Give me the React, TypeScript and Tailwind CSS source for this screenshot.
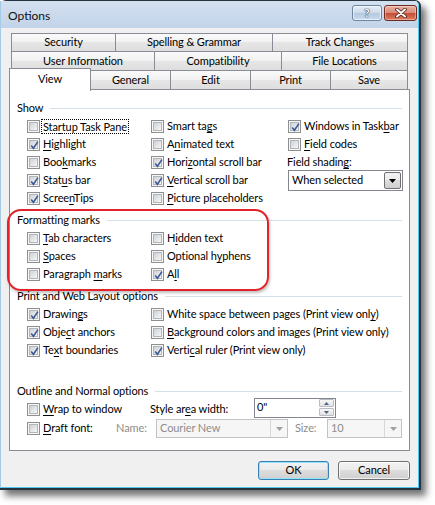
import React from 'react'

function Key({ text }: { text: string }) {
  const i = text.indexOf('&')
  if (i < 0) return <>{text}</>
  return (
    <>
      {text.slice(0, i)}
      <span className="underline underline-offset-[2px]">{text[i + 1]}</span>
      {text.slice(i + 2)}
    </>
  )
}

function Box({ checked }: { checked?: boolean }) {
  return (
    <span className="relative inline-flex h-[13px] w-[13px] shrink-0 border border-[#8e8f8f] bg-[#f7f7f7] p-[1px]">
      <span className="h-full w-full border border-[#b1b6bc] bg-[linear-gradient(135deg,#cdd1d7,#f6f6f6)]" />
      {checked && (
        <svg className="absolute left-[1px] top-[1px]" width="11" height="11" viewBox="0 0 11 11">
          <path d="M2.2 5.6 L4.4 8.3 L8.9 1.6" stroke="#3f5a95" strokeWidth="1.6" fill="none" />
        </svg>
      )}
    </span>
  )
}

function Check({ label, checked, focus }: { label: string; checked?: boolean; focus?: boolean }) {
  return (
    <div className="flex h-[18px] items-center whitespace-nowrap">
      <Box checked={checked} />
      {focus ? (
        <span className="ml-[1px] border border-dotted border-black px-[1px] leading-[13px]">
          <Key text={label} />
        </span>
      ) : (
        <span className="ml-[3px]">
          <Key text={label} />
        </span>
      )}
    </div>
  )
}

function Group({ title }: { title: string }) {
  return (
    <div className="flex h-[18px] items-center pl-[7px] pr-[7px]">
      <span className="whitespace-nowrap">{title}</span>
      <span className="ml-[7px] h-px flex-1 bg-[#d5dfe5]" />
    </div>
  )
}

function Arrow({ color }: { color: string }) {
  return (
    <svg width="7" height="4" viewBox="0 0 7 4">
      <path d="M0 0 H7 L3.5 4 Z" fill={color} />
    </svg>
  )
}

function Tab({ label, w, first }: { label: string; w: string; first?: boolean }) {
  return (
    <div
      className={`${w} ${first ? '' : '-ml-px'} flex h-full items-center justify-center border border-[#898c95] bg-[linear-gradient(#fafafa,#f1f1f1_50%,#e6e6e6_50%,#dedede)]`}
    >
      {label}
    </div>
  )
}

function DisabledCombo({ value, w }: { value: string; w: string }) {
  return (
    <div className={`${w} flex h-[19px] items-center border border-[#c3c3c3] bg-[#f6f6f6] pl-[3px] text-[#8d8d8d]`}>
      <span className="flex-1">{value}</span>
      <span className="flex h-full w-[17px] items-center justify-center border-l border-[#d8d8d8]">
        <Arrow color="#a0a0a0" />
      </span>
    </div>
  )
}

export default function App() {
  return (
    <div className="relative h-[505px] w-[435px] overflow-hidden bg-white font-['Lato',sans-serif] text-[11px] tracking-[-0.1px] text-black">
      <div className="flex h-[490px] w-[421px] flex-col rounded-t-[6px] border-t border-r-2 border-b-2 border-[#27323f] shadow-[5px_6px_7px_rgba(0,0,0,0.55)]">
        <div className="flex flex-1 flex-col rounded-tr-[5px] border-l border-r border-b border-l-[#a5cbe6] border-r-[#4fc6ee] border-b-[#4fc6ee] bg-[#f0f0f0]">
          <div className="flex h-[27px] shrink-0 items-start rounded-tr-[5px] bg-[linear-gradient(180deg,#d3e0ef,#c2d4ea)]">
            <span className="mt-[6px] ml-[7px] text-[12px] tracking-normal text-[#101010]">Options</span>
            <div className="mt-[4px] mr-[1px] ml-auto flex gap-[2px]">
              <div className="flex h-[16px] w-[30px] items-center justify-center rounded-[3px] border border-[#6f849e] bg-[linear-gradient(#e6eef7,#ccdaea_50%,#b4c8e0_50%,#c9daee)] shadow-[inset_0_0_0_1px_rgba(255,255,255,0.6)]">
                <span className="text-[12px] leading-none font-bold text-white [text-shadow:0_0_1px_#2b3a50,0_0_1px_#2b3a50,0_0_1px_#2b3a50]">?</span>
              </div>
              <div className="flex h-[16px] w-[33px] items-center justify-center rounded-[3px] border border-[#6e2b22] bg-[linear-gradient(#eab0a4,#d98a78_50%,#c54a35_50%,#d9805f)] shadow-[inset_0_0_0_1px_rgba(255,255,255,0.35)]">
                <svg width="14" height="10" viewBox="0 0 14 10">
                  <path d="M3 1.5 L11 8.5 M11 1.5 L3 8.5" stroke="#4a1a14" strokeWidth="3.6" strokeLinecap="round" />
                  <path d="M3 1.5 L11 8.5 M11 1.5 L3 8.5" stroke="#ffffff" strokeWidth="2" strokeLinecap="round" />
                </svg>
              </div>
            </div>
          </div>

          <div className="flex flex-1 flex-col pt-[5px] pr-[8px] pl-[8px]">
            <div className="ml-[2px] flex h-[19px]">
              <Tab first label="Security" w="w-[105px]" />
              <Tab label="Spelling & Grammar" w="w-[158px]" />
              <Tab label="Track Changes" w="w-[136px]" />
            </div>
            <div className="-mt-px ml-[2px] flex h-[20px]">
              <Tab first label="User Information" w="w-[144px]" />
              <Tab label="Compatibility" w="w-[128px]" />
              <Tab label="File Locations" w="w-[127px]" />
            </div>
            <div className="-mt-px flex h-[20px] items-end">
              <div className="relative z-10 -mb-px flex h-[23px] w-[82px] shrink-0 items-center justify-center border border-b-0 border-[#898c95] bg-white pb-[1px]">
                View
              </div>
              <Tab label="General" w="w-[81px]" />
              <Tab label="Edit" w="w-[81px]" />
              <Tab label="Print" w="w-[81px]" />
              <Tab label="Save" w="w-[78px]" />
            </div>

            <div className="-mt-px flex h-[362px] w-[401px] flex-col border border-[#898c95] bg-white pt-[9px]">
              <Group title="Show" />
              <div className="flex pl-[17px]">
                <div className="flex w-[124px] flex-col">
                  <Check focus label="Sta&rtup Task Pane" />
                  <Check checked label="&Highlight" />
                  <Check label="Boo&kmarks" />
                  <Check checked label="Stat&us bar" />
                  <Check checked label="Scree&nTips" />
                </div>
                <div className="flex w-[137px] flex-col">
                  <Check label="Smart ta&gs" />
                  <Check label="A&nimated text" />
                  <Check checked label="Hori&zontal scroll bar" />
                  <Check checked label="&Vertical scroll bar" />
                  <Check label="&Picture placeholders" />
                </div>
                <div className="flex flex-col">
                  <Check checked label="Windows in Task&bar" />
                  <Check label="&Field codes" />
                  <div className="-ml-px flex h-[18px] items-center">
                    <Key text="Field shadin&g:" />
                  </div>
                  <div className="-mt-px flex h-[21px] w-[115px] items-center border border-[#838790] bg-white pl-[3px]">
                    <span className="flex-1">When selected</span>
                    <span className="mr-[1px] flex h-[17px] w-[17px] items-center justify-center rounded-[2px] border border-[#707070] bg-[linear-gradient(#f2f2f2,#ebebeb_50%,#dddddd_50%,#cfcfcf)]">
                      <Arrow color="#000000" />
                    </span>
                  </div>
                </div>
              </div>

              <div className="mt-[4px]">
                <Group title="Formatting marks" />
              </div>
              <div className="flex pl-[17px]">
                <div className="flex w-[124px] flex-col">
                  <Check label="&Tab characters" />
                  <Check label="&Spaces" />
                  <Check label="Paragraph &marks" />
                </div>
                <div className="flex flex-col">
                  <Check label="H&idden text" />
                  <Check label="Optional h&yphens" />
                  <Check checked label="A&ll" />
                </div>
              </div>

              <div className="mt-[4px]">
                <Group title="Print and Web Layout options" />
              </div>
              <div className="flex pl-[17px]">
                <div className="flex w-[124px] flex-col">
                  <Check checked label="Drawin&gs" />
                  <Check checked label="Obje&ct anchors" />
                  <Check checked label="Te&xt boundaries" />
                </div>
                <div className="flex flex-col">
                  <Check label="White space between pages (Print view onl&y)" />
                  <Check label="&Background colors and images (Print view only)" />
                  <Check checked label="Verti&cal ruler (Print view only)" />
                </div>
              </div>

              <div className="mt-[23px]">
                <Group title="Outline and Normal options" />
              </div>
              <div className="flex h-[19px] items-center pl-[17px]">
                <div className="w-[123px]">
                  <Check label="&Wrap to window" />
                </div>
                <span className="w-[104px]">
                  <Key text="Style ar&ea width:" />
                </span>
                <div className="-mt-[4px] flex h-[20px] w-[82px] items-center border border-[#838790] bg-white pl-[2px]">
                  <span className="flex-1">0"</span>
                  <div className="mr-px flex flex-col gap-px">
                    <span className="flex h-[8px] w-[15px] items-center justify-center rounded-[1px] border border-[#b8bcc4] bg-[linear-gradient(#f6f6f6,#e2e2e2)]">
                      <svg width="5" height="3" viewBox="0 0 5 3"><path d="M0 3 H5 L2.5 0 Z" fill="#4d6185" /></svg>
                    </span>
                    <span className="flex h-[8px] w-[15px] items-center justify-center rounded-[1px] border border-[#b8bcc4] bg-[linear-gradient(#f6f6f6,#e2e2e2)]">
                      <svg width="5" height="3" viewBox="0 0 5 3"><path d="M0 0 H5 L2.5 3 Z" fill="#4d6185" /></svg>
                    </span>
                  </div>
                </div>
              </div>
              <div className="flex h-[19px] items-center pl-[17px]">
                <div className="w-[89px]">
                  <Check label="&Draft font:" />
                </div>
                <span className="w-[40px] text-[#8d8d8d]">Name:</span>
                <DisabledCombo value="Courier New" w="w-[132px]" />
                <span className="ml-[7px] w-[32px] text-[#8d8d8d]">Size:</span>
                <DisabledCombo value="10" w="w-[75px]" />
              </div>
            </div>

            <div className="mt-[10px] flex justify-end gap-[9px]">
              <button className="flex h-[19px] w-[71px] items-center justify-center rounded-[3px] border border-[#3c7fb1] bg-[linear-gradient(#f2f2f2,#ebebeb_50%,#dddddd_50%,#cfcfcf)] shadow-[inset_0_0_0_1px_#8fe4fb]">
                OK
              </button>
              <button className="flex h-[19px] w-[72px] items-center justify-center rounded-[3px] border border-[#707070] bg-[linear-gradient(#f2f2f2,#ebebeb_50%,#dddddd_50%,#cfcfcf)] shadow-[inset_0_0_0_1px_rgba(255,255,255,0.7)]">
                Cancel
              </button>
            </div>
          </div>
        </div>
      </div>

      <div className="pointer-events-none absolute top-[209px] left-[7px] h-[82px] w-[262px] rounded-[14px] border-2 border-[#e3232a] shadow-[1px_2px_3px_rgba(0,0,0,0.25)]" />
    </div>
  )
}
